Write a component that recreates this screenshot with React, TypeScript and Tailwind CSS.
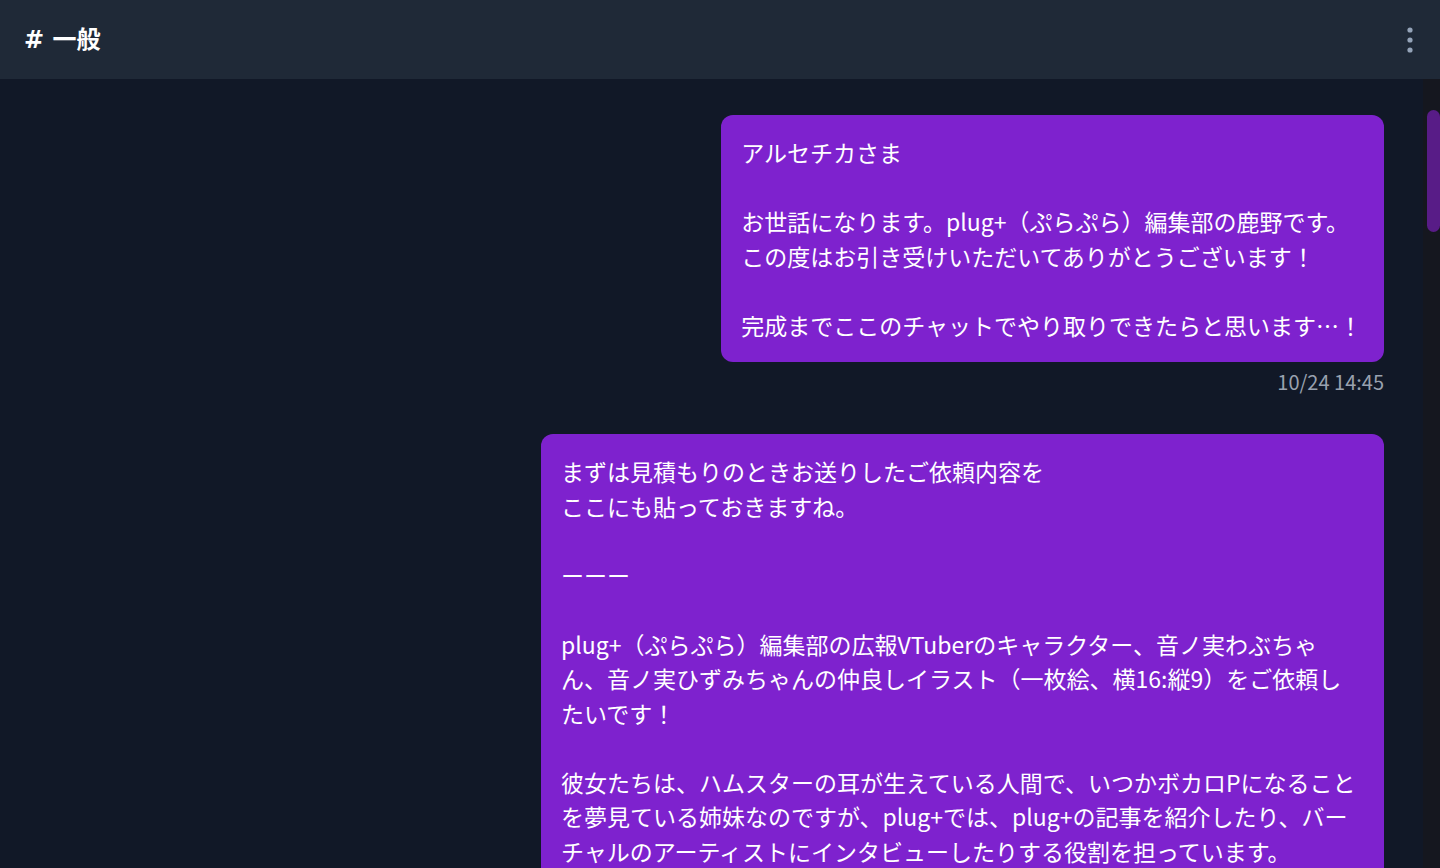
import React from "react";

type Message = {
  id: number;
  body: string;
  sentAt: string;
};

const messages: Message[] = [
  {
    id: 1,
    body:
      "アルセチカさま\n\nお世話になります。plug+（ぷらぷら）編集部の鹿野です。\nこの度はお引き受けいただいてありがとうございます！\n\n完成までここのチャットでやり取りできたらと思います…！",
    sentAt: "10/24 14:45",
  },
  {
    id: 2,
    body:
      "まずは見積もりのときお送りしたご依頼内容を\nここにも貼っておきますね。\n\nーーー\n\nplug+（ぷらぷら）編集部の広報VTuberのキャラクター、音ノ実わぶちゃん、音ノ実ひずみちゃんの仲良しイラスト（一枚絵、横16:縦9）をご依頼したいです！\n\n彼女たちは、ハムスターの耳が生えている人間で、いつかボカロPになることを夢見ている姉妹なのですが、plug+では、plug+の記事を紹介したり、バーチャルのアーティストにインタビューしたりする役割を担っています。\n\n今回はサイトのトップやSNSで使えるような、ふたりが仲良く並んでいるイラストをお願いできればと思っています。\n\nーーー",
    sentAt: "10/24 14:47",
  },
];

export default function App() {
  return (
    <div className="h-screen flex flex-col bg-[#111827] font-['Noto_Sans_CJK_JP','Noto_Sans',sans-serif] overflow-hidden">
      {/* チャンネルヘッダー */}
      <header className="h-[79px] shrink-0 bg-[#1f2937] flex items-center justify-between pl-6 pr-[25px]">
        <h1 className="text-2xl font-bold text-white font-['DejaVu_Sans','Noto_Sans_CJK_JP',sans-serif]">
          # 一般
        </h1>
        <button className="w-[10px] h-[30px] flex items-center justify-center">
          <svg width="10" height="30" viewBox="0 0 10 30" fill="#94a3b8">
            <circle cx="5" cy="5" r="2.6" />
            <circle cx="5" cy="15" r="2.6" />
            <circle cx="5" cy="25" r="2.6" />
          </svg>
        </button>
      </header>

      <div className="flex flex-1 min-h-0">
        {/* メッセージ一覧 */}
        <div className="flex-1 overflow-hidden pt-9 pl-10 pr-[39px] flex flex-col gap-[38px]">
          {messages.map((m) => (
            <div key={m.id} className="flex flex-col items-end">
              <div className="max-w-[843px] rounded-xl bg-[#7e22ce] py-5 pl-5 pr-[22px] text-[23px] leading-[1.5] text-white whitespace-pre-wrap">
                {m.body}
              </div>
              <span className="mt-[6px] text-[20px] leading-[1.4] text-gray-400">
                {m.sentAt}
              </span>
            </div>
          ))}
        </div>

        {/* スクロールバー */}
        <div className="w-[17px] shrink-0 bg-[#15171f] pt-[31px] pl-1">
          <div className="h-[122px] rounded-full bg-[#581c87]"></div>
        </div>
      </div>
    </div>
  );
}
